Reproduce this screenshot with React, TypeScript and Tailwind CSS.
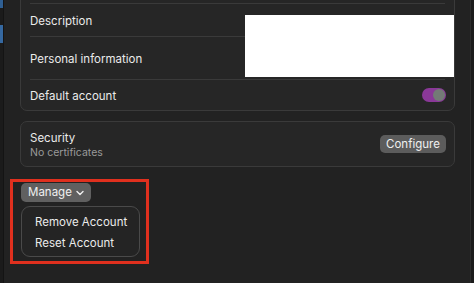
import React from "react";

export default function App() {
  const font = { fontFamily: "Inter, 'Liberation Sans', Arial, sans-serif" };
  return (
    <div
      className="relative w-[474px] h-[283px] bg-[#222222] flex overflow-hidden text-[#ebebeb]"
      style={font}
    >
      {/* left sidebar sliver */}
      <div className="w-[4px] h-full flex flex-col bg-[#1b1b1b] border-r border-[#141414]">
        <div className="h-[8px] bg-[#2f5f93]" />
        <div className="h-[17px]" />
        <div className="h-[18px] bg-[#3568a0]" />
      </div>

      {/* main */}
      <div className="flex-1 flex flex-col pl-[16px] pr-[15px]">
        {/* Card 1 */}
        <div className="-mt-[40px] rounded-[7px] border border-[#3a3a3a] bg-[#262626] px-[9px] flex flex-col">
          <div className="h-[43px] border-b border-[#3a3a3a]" />
          <div className="h-[33px] pt-[3px] flex items-center border-b border-[#3a3a3a] text-[11.5px]">
            Description
          </div>
          <div className="h-[43px] pt-[3px] flex items-center border-b border-[#3a3a3a] text-[11.5px]">
            Personal information
          </div>
          <div className="h-[30px] flex items-center justify-between text-[11.5px]">
            <span className="pt-[3px]">Default account</span>
            <div className="w-[24px] h-[14px] rounded-full bg-[#8a3898] flex items-center justify-end pr-[1px] mr-[-1px]">
              <div className="w-[12px] h-[12px] rounded-full bg-[#737a76]" />
            </div>
          </div>
        </div>

        {/* Card 2 */}
        <div className="mt-[10px] h-[46px] rounded-[7px] border border-[#3a3a3a] bg-[#262626] pl-[9px] pr-[8px] flex items-center justify-between">
          <div className="pt-[3px] flex flex-col leading-none">
            <span className="text-[11.5px] text-[#ebebeb]">Security</span>
            <span className="mt-[4px] text-[10.5px] text-[#9a9a9a]">No certificates</span>
          </div>
          <button className="h-[18px] w-[66px] rounded-[5px] bg-[#5c5c5c] pt-[1px] text-[11.5px] text-[#f0f0f0] flex items-center justify-center">
            Configure
          </button>
        </div>

        {/* Manage */}
        <div className="mt-[16px] flex flex-col items-start">
          <button className="ml-[1px] h-[19px] w-[70px] rounded-[5px] bg-[#606060] pl-[7px] pt-[1px] text-[11.5px] text-[#f0f0f0] flex items-center gap-[4px]">
            Manage
            <svg width="8" height="6" viewBox="0 0 8 6" fill="none">
              <path d="M1 1.5 L4 4.5 L7 1.5" stroke="#f0f0f0" strokeWidth="1.4" strokeLinecap="round" strokeLinejoin="round" />
            </svg>
          </button>
          <div className="mt-[4px] ml-[1px] w-[119px] h-[51px] rounded-[9px] border border-[#4a4a4a] bg-[#242424] pl-[13px] pt-[3px] flex flex-col justify-center gap-[10px] text-[11.5px] text-[#ebebeb] leading-none">
            <span>Remove Account</span>
            <span>Reset Account</span>
          </div>
        </div>
      </div>

      {/* right edge */}
      <div className="w-[4px] h-full bg-[#1c1c1c] border-l border-[#2c2c2c]" />

      {/* redaction overlay */}
      <div className="absolute left-[245px] top-[15px] w-[209px] h-[62px] bg-white" />

      {/* red annotation box */}
      <div className="absolute left-[10px] top-[179px] w-[139px] h-[85px] border-[3px] border-[#e0301e]" />
    </div>
  );
}
